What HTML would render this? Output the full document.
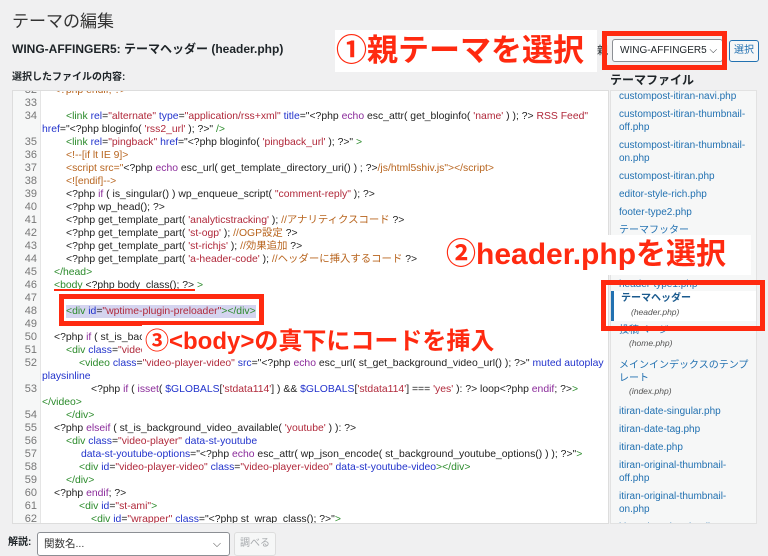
<!DOCTYPE html>
<html><head><meta charset="utf-8">
<style>
*{margin:0;padding:0;box-sizing:border-box}
body{width:768px;height:553px;overflow:hidden;background:#f0f0f1;font-family:"Liberation Sans","Noto Sans CJK JP",sans-serif;color:#1d2327;position:relative}
.abs{position:absolute}
.code{position:absolute;left:12px;top:90px;width:597px;height:434px;background:#fff;border:1px solid #ddd;overflow:hidden}
.gut{position:absolute;left:0;top:0;width:28px;height:100%;background:#f6f7f7;border-right:1px solid #e5e5e5}
.inner{position:absolute;left:0;top:-4px;width:100%;height:460px}
.ln{position:absolute;left:0;width:24px;text-align:right;font-size:11px;color:#777;line-height:13px}
.tx{position:absolute;font-size:10.4px;line-height:13px;white-space:nowrap;color:#222}
.g{color:#2a8a2a}.b{color:#2233cc}.r{color:#b0283a}.p{color:#8a2a9a}.o{color:#b8651f}
.side{position:absolute;left:610px;top:90px;width:147px;height:434px;background:#f6f7f7;border:1px solid #e2e2e2;overflow:hidden}
.si{position:absolute;left:8px;font-size:10px;line-height:13px;color:#2271b1;width:135px}
.it{font-style:italic;color:#555;font-size:8.5px;padding-left:10px}
.ann{position:absolute;background:#fff;color:#ff2a10;font-weight:bold;white-space:nowrap}
</style></head><body>
<div class="abs" style="left:12px;top:7px;font-size:17px;color:#333">テーマの編集</div>
<div class="abs" style="left:12px;top:40px;font-size:12px;font-weight:bold">WING-AFFINGER5: テーマヘッダー (header.php)</div>
<div class="abs" style="left:12px;top:68px;font-size:10px;font-weight:bold">選択したファイルの内容:</div>
<div class="abs" style="left:597px;top:42px;font-size:11px">親</div>
<div class="abs" style="left:612px;top:39px;width:111px;height:23px;background:#fff;border:1px solid #8c8f94;border-radius:3px;font-size:10px;line-height:21px;padding-left:7px">WING-AFFINGER5 ⌵</div>
<div class="abs" style="left:729px;top:40px;width:30px;height:22px;border:1px solid #2271b1;border-radius:3px;color:#2271b1;font-size:10px;line-height:20px;text-align:center;background:#f6f7f7">選択</div>
<div class="abs" style="left:602px;top:31px;width:125px;height:39px;border:5px solid #ff2a10"></div>
<div class="abs" style="left:610px;top:71px;font-size:12px;font-weight:bold">テーマファイル</div>

<div class="code"><div class="gut"></div><div class="inner">
<div class="ln" style="top:-3px">32</div><div class="tx o" style="left:41px;top:-3px">&lt;?php endif; ?&gt;</div>
<div class="ln" style="top:10px">33</div>
<div class="ln" style="top:23px">34</div><div class="tx" style="left:53px;top:23px"><span class="g">&lt;link</span> <span class="b">rel</span>=<span class="r">"alternate"</span> <span class="b">type</span>=<span class="r">"application/rss+xml"</span> <span class="b">title</span>="&lt;?php <span class="p">echo</span> esc_attr( get_bloginfo( <span class="r">'name'</span> ) ); ?&gt; <span class="r">RSS Feed"</span></div>
<div class="tx" style="left:29px;top:36px"><span class="b">href</span>="&lt;?php bloginfo( <span class="r">'rss2_url'</span> ); ?&gt;" <span class="g">/&gt;</span></div>
<div class="ln" style="top:49px">35</div><div class="tx" style="left:53px;top:49px"><span class="g">&lt;link</span> <span class="b">rel</span>=<span class="r">"pingback"</span> <span class="b">href</span>="&lt;?php bloginfo( <span class="r">'pingback_url'</span> ); ?&gt;" <span class="g">&gt;</span></div>
<div class="ln" style="top:62px">36</div><div class="tx o" style="left:53px;top:62px">&lt;!--[if lt IE 9]&gt;</div>
<div class="ln" style="top:75px">37</div><div class="tx" style="left:53px;top:75px"><span class="o">&lt;script src="</span>&lt;?php <span class="p">echo</span> esc_url( get_template_directory_uri() ) ; ?&gt;<span class="o">/js/html5shiv.js"&gt;&lt;/script&gt;</span></div>
<div class="ln" style="top:88px">38</div><div class="tx o" style="left:53px;top:88px">&lt;![endif]--&gt;</div>
<div class="ln" style="top:101px">39</div><div class="tx" style="left:53px;top:101px">&lt;?php <span class="p">if</span> ( is_singular() ) wp_enqueue_script( <span class="r">"comment-reply"</span> ); ?&gt;</div>
<div class="ln" style="top:114px">40</div><div class="tx" style="left:53px;top:114px">&lt;?php wp_head(); ?&gt;</div>
<div class="ln" style="top:127px">41</div><div class="tx" style="left:53px;top:127px">&lt;?php get_template_part( <span class="r">'analyticstracking'</span> ); <span class="o">//アナリティクスコード</span> ?&gt;</div>
<div class="ln" style="top:140px">42</div><div class="tx" style="left:53px;top:140px">&lt;?php get_template_part( <span class="r">'st-ogp'</span> ); <span class="o">//OGP設定</span> ?&gt;</div>
<div class="ln" style="top:153px">43</div><div class="tx" style="left:53px;top:153px">&lt;?php get_template_part( <span class="r">'st-richjs'</span> ); <span class="o">//効果追加</span> ?&gt;</div>
<div class="ln" style="top:166px">44</div><div class="tx" style="left:53px;top:166px">&lt;?php get_template_part( <span class="r">'a-header-code'</span> ); <span class="o">//ヘッダーに挿入するコード</span> ?&gt;</div>
<div class="ln" style="top:179px">45</div><div class="tx g" style="left:41px;top:179px">&lt;/head&gt;</div>
<div class="ln" style="top:192px">46</div><div class="tx" style="left:41px;top:192px"><span class="g">&lt;body</span> &lt;?php body_class(); ?&gt; <span class="g">&gt;</span></div>
<div class="ln" style="top:205px">47</div>
<div class="ln" style="top:218px">48</div><div class="tx" style="left:53px;top:218px;background:#d4d4ef"><span class="g">&lt;div</span> <span class="b">id</span>=<span class="r">"wptime-plugin-preloader"</span><span class="g">&gt;&lt;/div&gt;</span></div>
<div class="ln" style="top:231px">49</div>
<div class="ln" style="top:244px">50</div><div class="tx" style="left:41px;top:244px">&lt;?php <span class="p">if</span> ( st_is_bac</div>
<div class="ln" style="top:257px">51</div><div class="tx" style="left:53px;top:257px"><span class="g">&lt;div</span> <span class="b">class</span>=<span class="r">"video</span></div>
<div class="ln" style="top:270px">52</div><div class="tx" style="left:66px;top:270px"><span class="g">&lt;video</span> <span class="b">class</span>=<span class="r">"video-player-video"</span> <span class="b">src</span>="&lt;?php <span class="p">echo</span> esc_url( st_get_background_video_url() ); ?&gt;" <span class="b">muted autoplay</span></div>
<div class="tx b" style="left:29px;top:283px">playsinline</div>
<div class="ln" style="top:296px">53</div><div class="tx" style="left:78px;top:296px">&lt;?php <span class="p">if</span> ( <span class="p">isset</span>( <span class="b">$GLOBALS</span>[<span class="r">'stdata114'</span>] ) &amp;&amp; <span class="b">$GLOBALS</span>[<span class="r">'stdata114'</span>] === <span class="r">'yes'</span> ): ?&gt; loop&lt;?php <span class="p">endif</span>; ?&gt;<span class="g">&gt;</span></div>
<div class="tx g" style="left:29px;top:309px">&lt;/video&gt;</div>
<div class="ln" style="top:322px">54</div><div class="tx g" style="left:53px;top:322px">&lt;/div&gt;</div>
<div class="ln" style="top:335px">55</div><div class="tx" style="left:41px;top:335px">&lt;?php <span class="p">elseif</span> ( st_is_background_video_available( <span class="r">'youtube'</span> ) ): ?&gt;</div>
<div class="ln" style="top:348px">56</div><div class="tx" style="left:53px;top:348px"><span class="g">&lt;div</span> <span class="b">class</span>=<span class="r">"video-player"</span> <span class="b">data-st-youtube</span></div>
<div class="ln" style="top:361px">57</div><div class="tx" style="left:68px;top:361px"><span class="b">data-st-youtube-options</span>="&lt;?php <span class="p">echo</span> esc_attr( wp_json_encode( st_background_youtube_options() ) ); ?&gt;"<span class="g">&gt;</span></div>
<div class="ln" style="top:374px">58</div><div class="tx" style="left:66px;top:374px"><span class="g">&lt;div</span> <span class="b">id</span>=<span class="r">"video-player-video"</span> <span class="b">class</span>=<span class="r">"video-player-video"</span> <span class="b">data-st-youtube-video</span><span class="g">&gt;&lt;/div&gt;</span></div>
<div class="ln" style="top:387px">59</div><div class="tx g" style="left:53px;top:387px">&lt;/div&gt;</div>
<div class="ln" style="top:400px">60</div><div class="tx" style="left:41px;top:400px">&lt;?php <span class="p">endif</span>; ?&gt;</div>
<div class="ln" style="top:413px">61</div><div class="tx" style="left:66px;top:413px"><span class="g">&lt;div</span> <span class="b">id</span>=<span class="r">"st-ami"</span><span class="g">&gt;</span></div>
<div class="ln" style="top:426px">62</div><div class="tx" style="left:78px;top:426px"><span class="g">&lt;div</span> <span class="b">id</span>=<span class="r">"wrapper"</span> <span class="b">class</span>="&lt;?php st_wrap_class(); ?&gt;"<span class="g">&gt;</span></div>
</div></div>

<div class="side">
<div class="si" style="top:-1px">custompost-itiran-navi.php</div>
<div class="si" style="top:17px">custompost-itiran-thumbnail-<br>off.php</div>
<div class="si" style="top:48px">custompost-itiran-thumbnail-<br>on.php</div>
<div class="si" style="top:79px">custompost-itiran.php</div>
<div class="si" style="top:97px">editor-style-rich.php</div>
<div class="si" style="top:115px">footer-type2.php</div>
<div class="si" style="top:133px">テーマフッター</div>
<div class="si" style="top:187px">header-type1.php</div>
<div class="si" style="top:200px;left:0;width:147px;height:30px;background:#fff;border-left:3px solid #2271b1;padding-left:7px;padding-top:1px;font-weight:bold;color:#1a5a8e">テーマヘッダー<div class="it" style="font-weight:normal;line-height:14px">(header.php)</div></div>
<div class="si" style="top:233px">投稿ページ<div class="it">(home.php)</div></div>
<div class="si" style="top:268px">メインインデックスのテンプレート<div class="it">(index.php)</div></div>
<div class="si" style="top:314px">itiran-date-singular.php</div>
<div class="si" style="top:332px">itiran-date-tag.php</div>
<div class="si" style="top:350px">itiran-date.php</div>
<div class="si" style="top:368px">itiran-original-thumbnail-<br>off.php</div>
<div class="si" style="top:399px">itiran-original-thumbnail-<br>on.php</div>
<div class="si" style="top:430px">itiran-date-thumbnail-</div>
</div>

<div class="abs" style="left:8px;top:533px;font-size:10px;font-weight:bold">解説:</div>
<div class="abs" style="left:37px;top:532px;width:193px;height:24px;background:#fff;border:1px solid #8c8f94;border-radius:3px;font-size:10.5px;line-height:22px;padding-left:6px;color:#333">関数名...<span style="position:absolute;right:8px;color:#555">⌵</span></div>
<div class="abs" style="left:234px;top:532px;width:42px;height:24px;border:1px solid #ddd;border-radius:3px;background:#f6f7f7;color:#a7aaad;font-size:10px;line-height:22px;text-align:center">調べる</div>

<div class="ann" style="left:335px;top:30px;height:42px;width:262px;font-size:31px;line-height:42px;padding-left:1px">①親テーマを選択</div>
<div class="ann" style="left:445px;top:235px;height:40px;width:306px;font-size:30px;line-height:40px;padding-left:1px">②header.phpを選択</div>
<div class="abs" style="left:601px;top:280px;width:164px;height:51px;border:5px solid #ff2a10"></div>
<div class="abs" style="left:54px;top:289px;width:141px;height:2px;background:#ff2a10"></div>
<div class="abs" style="left:59px;top:294px;width:205px;height:32px;border:5px solid #ff2a10"></div>
<div class="ann" style="left:142px;top:325px;height:34px;font-size:24px;line-height:34px;padding:0 3px">③&lt;body&gt;の真下にコードを挿入</div>
</body></html>
